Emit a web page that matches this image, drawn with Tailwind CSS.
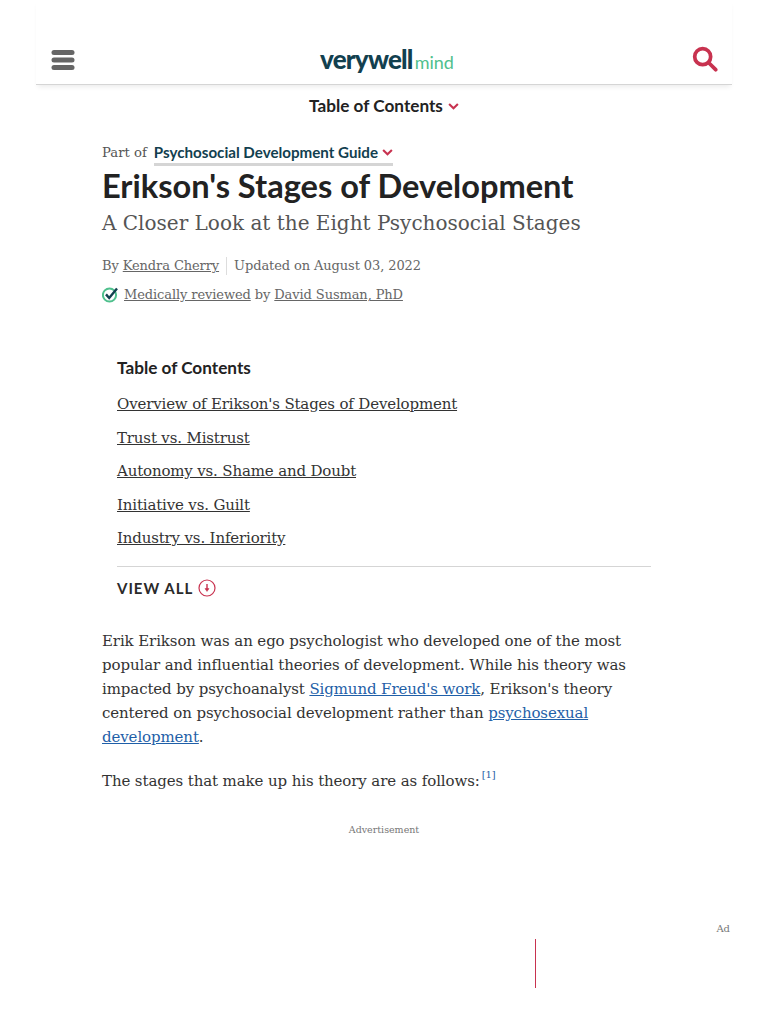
<!DOCTYPE html>
<html lang="en">
<head>
  <meta charset="UTF-8">
  <title>Erikson's Stages of Development</title>
  <script src="https://cdn.jsdelivr.net/npm/@tailwindcss/browser@4"></script>
</head>
<body class="bg-white h-[1024px] overflow-hidden font-['DejaVu_Serif',serif] text-[#3a3a3a]">
  <!-- Header -->
  <header class="mx-9 h-[85px] pt-[40px] border-b border-[#d5d5d5] shadow-[0_4px_5px_-2px_rgba(0,0,0,0.08)] flex justify-between items-start px-[15px]">
    <svg class="w-6 h-6 mt-[8px]" viewBox="0 0 24 24" fill="#666"><rect x="0.5" y="2" width="23" height="5" rx="2.5"/><rect x="0.5" y="9.5" width="23" height="5" rx="2.5"/><rect x="0.5" y="17" width="23" height="5" rx="2.5"/></svg>
    <div class="flex items-baseline font-['Lato',sans-serif] mt-[2px] ml-[7px] leading-[34px]">
      <span class="text-[26px] font-black text-[#12404f] tracking-[-0.8px]">verywell</span>
      <span class="text-[18px] text-[#4fc08d] ml-[2px]">mind</span>
    </div>
    <svg class="w-[26px] h-[26px] mt-[6px] mr-[-1px]" viewBox="0 0 28 28" fill="none" stroke="#c8324f" stroke-width="4" stroke-linecap="round"><circle cx="11.5" cy="11.5" r="8.6"/><path d="M18 18 L25.5 25.5"/></svg>
  </header>

  <!-- Sticky table of contents toggle -->
  <div class="flex justify-center items-center gap-[5px] h-[42px] font-['Lato',sans-serif] font-bold text-[17.2px] text-[#222]">
    Table of Contents
    <svg class="w-[11px] h-[7px]" viewBox="0 0 12 8" fill="none" stroke="#c8324f" stroke-width="2.4"><path d="M1 1.2 L6 6 L11 1.2"/></svg>
  </div>

  <main class="px-[102px]">
    <!-- Breadcrumb -->
    <div class="flex items-start mt-[15px] h-[26px]">
      <span class="text-[13.2px] leading-[22px] text-[#555] mr-[7px]">Part of</span>
      <span class="flex items-center gap-[4px] h-[24px] border-b-[3px] border-[#d5d5d5] font-['Lato',sans-serif] font-bold text-[15.15px] text-[#12404f]">
        Psychosocial Development Guide
        <svg class="w-[11px] h-[7px]" viewBox="0 0 12 8" fill="none" stroke="#c8324f" stroke-width="2.4"><path d="M1 1.2 L6 6 L11 1.2"/></svg>
      </span>
    </div>

    <h1 class="font-['Lato',sans-serif] font-bold text-[32.6px] leading-[40px] text-[#222] mt-[-2px]">Erikson's Stages of Development</h1>
    <h2 class="text-[20px] leading-[32px] text-[#555] mt-[1px]">A Closer Look at the Eight Psychosocial Stages</h2>

    <!-- Byline -->
    <div class="flex items-center text-[13px] tracking-[-0.1px] text-[#666] mt-[17px] h-[20px]">
      <span>By <a href="#" class="underline">Kendra Cherry</a></span>
      <span class="w-px h-[18px] bg-[#ddd] mx-[7px]"></span>
      <span>Updated on August 03, 2022</span>
    </div>
    <div class="flex items-center text-[13px] tracking-[-0.1px] text-[#666] mt-[9px] h-[20px]">
      <svg class="w-[17px] h-[17px] mr-[5px] mt-[-2px]" viewBox="0 0 17 17" fill="none">
        <circle cx="7.5" cy="9" r="6.6" stroke="#4fc08d" stroke-width="2"/>
        <path d="M4 8.4 L7.2 12 L15 2.5" stroke="#12404f" stroke-width="2.4"/>
      </svg>
      <span><a href="#" class="underline">Medically reviewed</a> by <a href="#" class="underline">David Susman, PhD</a></span>
    </div>

    <!-- Table of contents -->
    <nav class="mt-[51px] px-[15px]">
      <div class="font-['Lato',sans-serif] font-bold text-[17.2px] leading-[24px] text-[#222]">Table of Contents</div>
      <ul class="mt-[8px] text-[15px] tracking-[-0.16px] leading-[33.5px] text-[#333] underline">
        <li><a href="#">Overview of Erikson's Stages of Development</a></li>
        <li><a href="#">Trust vs. Mistrust</a></li>
        <li><a href="#">Autonomy vs. Shame and Doubt</a></li>
        <li><a href="#">Initiative vs. Guilt</a></li>
        <li><a href="#">Industry vs. Inferiority</a></li>
      </ul>
      <div class="mt-[10px] border-t border-[#d5d5d5] pt-[10px] flex items-center gap-[5px] font-['Lato',sans-serif] font-bold text-[15px] tracking-[1px] text-[#2a2a2a]">
        VIEW ALL
        <svg class="w-[18px] h-[18px]" viewBox="0 0 18 18" fill="none" stroke="#c8324f"><circle cx="9" cy="9" r="8" stroke-width="1.2"/><path d="M9 5 V11" stroke-width="1.4"/><path d="M7 9.6 L9 12.4 L11 9.6 Z" fill="#c8324f" stroke-width="0.6"/></svg>
      </div>
    </nav>

    <!-- Article -->
    <p class="mt-[30px] text-[15px] tracking-[-0.11px] leading-[24px] text-[#333]">Erik Erikson was an ego psychologist who developed one of the most popular and influential theories of development. While his theory was impacted by psychoanalyst <a href="#" class="underline text-[#1f5fa8]">Sigmund Freud's work</a>, Erikson's theory centered on psychosocial development rather than <a href="#" class="underline text-[#1f5fa8]">psychosexual development</a>.</p>
    <p class="mt-[20px] text-[15px] tracking-[-0.11px] leading-[24px] text-[#333]">The stages that make up his theory are as follows:<sup class="text-[10px] top-[-8px] text-[#1f5fa8] ml-[2px]">[1]</sup></p>

    <div class="mt-[30px] text-center text-[9.5px] text-[#777] ml-[-102px] mr-[-102px]">Advertisement</div>
  </main>

  <!-- Ad slot -->
  <div class="flex justify-end pr-[38px] mt-[84px] text-[10px] text-[#777]">Ad</div>
  <div class="ml-[535px] mt-[3px] w-px h-[49px] bg-[#c8324f]"></div>
</body>
</html>
